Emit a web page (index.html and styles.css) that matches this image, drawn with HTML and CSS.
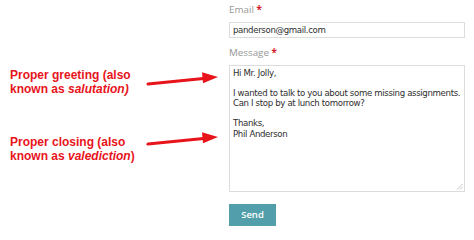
FILE: index.html
```html
<!DOCTYPE html>
<html>
<head>
<meta charset="utf-8">
<link rel="stylesheet" href="styles.css">
</head>
<body>
<div class="page">
  <div class="notes">
    <div class="note note-greeting">
      <p class="note-text">Proper greeting (also<br>known as <em>salutation)</em></p>
      <svg class="arrow" width="74" height="18" viewBox="0 0 74 18">
        <line x1="2" y1="14" x2="60" y2="8.3" stroke="#e8141b" stroke-width="3" stroke-linecap="round"/>
        <polygon points="72,7 56,2.3 57,13.2" fill="#e8141b"/>
      </svg>
    </div>
    <div class="note note-closing">
      <p class="note-text">Proper closing (also<br>known as <em>valediction</em>)</p>
      <svg class="arrow" width="74" height="18" viewBox="0 0 74 18">
        <line x1="2" y1="14" x2="60" y2="8.3" stroke="#e8141b" stroke-width="3" stroke-linecap="round"/>
        <polygon points="72,7 56,2.3 57,13.2" fill="#e8141b"/>
      </svg>
    </div>
  </div>
  <form class="form">
    <label class="label">Email <span class="req">*</span></label>
    <div class="field">panderson@gmail.com</div>
    <label class="label label-message">Message <span class="req">*</span></label>
    <div class="area">
      <div class="area-text">Hi Mr. Jolly,<br><br>I wanted to talk to you about some missing assignments.<br>Can I stop by at lunch tomorrow?<br><br>Thanks,<br>Phil Anderson</div>
      <svg class="grip" width="7" height="7" viewBox="0 0 7 7">
        <line x1="1" y1="6.5" x2="6.5" y2="1" stroke="#b8b8b8" stroke-width="0.8"/>
        <line x1="4" y1="6.5" x2="6.5" y2="4" stroke="#b8b8b8" stroke-width="0.8"/>
      </svg>
    </div>
    <div class="button">Send</div>
  </form>
</div>
</body>
</html>
```
FILE: styles.css
```css
html, body {
  margin: 0;
  padding: 0;
  background: #ffffff;
}

.page {
  display: flex;
  width: 474px;
  height: 235px;
  overflow: hidden;
}

.notes {
  width: 219px;
  padding-left: 10px;
  padding-top: 68px;
  display: flex;
  flex-direction: column;
  gap: 39px;
}

.note {
  display: flex;
  align-items: flex-start;
}

.note-text {
  margin: 0;
  width: 136px;
  font-family: "Liberation Sans", Arial, sans-serif;
  font-weight: bold;
  font-size: 12px;
  line-height: 14px;
  color: #e8141b;
  white-space: nowrap;
}

.note-text em {
  font-style: italic;
}

.arrow {
  display: block;
  flex: none;
}

.note-greeting .arrow {
  margin-top: 2px;
}

.note-closing .arrow {
  margin-top: -5px;
}

.form {
  width: 236px;
  padding-top: 4px;
  display: flex;
  flex-direction: column;
  align-items: flex-start;
  font-family: "Open Sans", sans-serif;
}

.label {
  font-size: 9.8px;
  line-height: 12px;
  color: #979797;
}

.req {
  color: #d4202a;
  font-weight: bold;
}

.label-message {
  margin-top: 9px;
}

.field,
.area {
  font-family: "DejaVu Sans", sans-serif;
  font-size: 8.6px;
  letter-spacing: -0.35px;
  color: #2e2e2e;
}

.field {
  margin-top: 6px;
  box-sizing: border-box;
  width: 236px;
  height: 16px;
  border: 1px solid #dcdcdc;
  padding: 0 3px;
  line-height: 14px;
}

.area {
  position: relative;
  margin-top: 6px;
  box-sizing: border-box;
  width: 236px;
  height: 127px;
  border: 1px solid #dcdcdc;
  padding: 2px 3px;
  line-height: 10.1px;
}

.area-text {
  white-space: nowrap;
}

.grip {
  position: absolute;
  right: 1px;
  bottom: 1px;
}

.button {
  margin-top: 12px;
  width: 47px;
  height: 22px;
  background: #529fab;
  color: #ffffff;
  font-size: 9.5px;
  font-weight: 600;
  line-height: 22px;
  text-align: center;
}
```
